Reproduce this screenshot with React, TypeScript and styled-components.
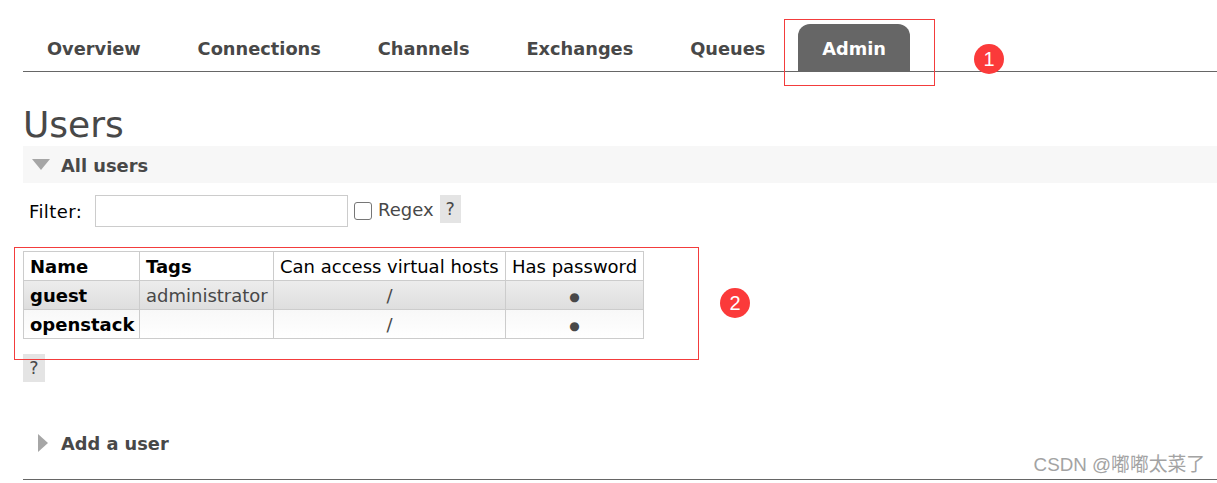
import React from 'react';
import styled, { createGlobalStyle } from 'styled-components';

const Global = createGlobalStyle`
  html, body { margin: 0; padding: 0; background: #fff; }
  body { font-family: "DejaVu Sans", Verdana, sans-serif; color: #484848; overflow: hidden; }
`;

const Page = styled.div`
  position: relative;
  width: 1217px;
  height: 483px;
  box-sizing: border-box;
  padding: 24px 0 0 23px;
  overflow: hidden;
`;

const Nav = styled.nav`
  display: flex;
  height: 47px;
  border-bottom: 1px solid #666;
  gap: 8.9px;
`;

const Tab = styled.a<{ $active?: boolean }>`
  display: block;
  height: 47px;
  line-height: 49px;
  padding: 0 24px;
  font-size: 17.8px;
  font-weight: 700;
  color: ${p => (p.$active ? '#fff' : '#484848')};
  background: ${p => (p.$active ? '#666' : 'transparent')};
  border-radius: 12px 12px 0 0;
`;

const Title = styled.h1`
  margin: 0;
  height: 74px;
  padding-top: 30px;
  box-sizing: border-box;
  font-size: 36px;
  line-height: 45px;
  font-weight: 400;
  color: #484848;
`;

const SectionHead = styled.div`
  display: flex;
  align-items: center;
  height: 37px;
  background: #f7f7f7;
  font-size: 17.85px;
  font-weight: 700;
  color: #484848;
`;

const HeadLabel = styled.span`
  padding-top: 2px;
`;

const ArrowSlot = styled.span<{ $shift?: number }>`
  display: flex;
  justify-content: center;
  align-items: center;
  width: 36px;
  margin-right: 2px;
  padding-left: ${p => p.$shift ?? 0}px;
  box-sizing: border-box;
`;

const FilterRow = styled.div`
  display: flex;
  align-items: center;
  height: 32px;
  margin-top: 12px;
  padding-left: 6px;
  font-size: 18px;
`;

const FilterLabel = styled.label`
  width: 66px;
  color: #000;
  letter-spacing: 0.4px;
`;

const FilterInput = styled.div`
  width: 253px;
  height: 32px;
  box-sizing: border-box;
  border: 1px solid #ccc;
  background: #fff;
`;

const Checkbox = styled.span`
  width: 18px;
  height: 18px;
  margin: 0 6px 0 6px;
  box-sizing: border-box;
  border: 1px solid #767676;
  border-radius: 3px;
  background: #fff;
`;

const RegexText = styled.span`
  color: #484848;
  margin-bottom: 4px;
`;

const Help = styled.span<{ $w: number; $h: number }>`
  display: flex;
  align-items: center;
  justify-content: center;
  width: ${p => p.$w}px;
  height: ${p => p.$h}px;
  background: #e4e4e4;
  color: #484848;
  font-size: 17.5px;
`;

const RegexHelp = styled(Help)`
  margin-left: 6px;
  align-self: flex-start;
`;

const UserTable = styled.table`
  border-collapse: collapse;
  margin-top: 24px;
  table-layout: fixed;
  width: 620px;
  font-size: 18px;
`;

const Th = styled.th<{ $w: number; $bold?: boolean }>`
  width: ${p => p.$w}px;
  height: 29px;
  padding: 0 6px;
  box-sizing: border-box;
  border: 1px solid #ccc;
  background: #fff;
  text-align: left;
  color: #000;
  font-weight: ${p => (p.$bold ? 700 : 400)};
  font-size: 18px;
  white-space: nowrap;
`;

const Row = styled.tr<{ $alt?: boolean }>`
  background: ${p =>
    p.$alt
      ? 'linear-gradient(#f8f8f8, #fff)'
      : 'linear-gradient(#ececec, #dedede)'};
`;

const Td = styled.td<{ $center?: boolean; $bold?: boolean }>`
  height: 29px;
  padding: 0 6px;
  box-sizing: border-box;
  border: 1px solid #ccc;
  font-weight: ${p => (p.$bold ? 700 : 400)};
  color: ${p => (p.$bold ? '#000' : '#484848')};
  text-align: ${p => (p.$center ? 'center' : 'left')};
  white-space: nowrap;
`;

const Dot = styled.span`
  display: inline-block;
  padding-bottom: 2px;
  font-size: 12px;
`;

const TableHelp = styled(Help)`
  margin-top: 15px;
`;

const AddSection = styled.div`
  display: flex;
  align-items: center;
  height: 24px;
  margin-top: 49px;
  font-size: 17.8px;
  font-weight: 700;
  color: #484848;
`;

const Footer = styled.div`
  margin-top: 24px;
  border-top: 1px solid #666;
`;

const RedBox = styled.div<{ $x: number; $y: number; $w: number; $h: number }>`
  position: absolute;
  left: ${p => p.$x}px;
  top: ${p => p.$y}px;
  width: ${p => p.$w}px;
  height: ${p => p.$h}px;
  box-sizing: border-box;
  border: 1px solid #f33c3c;
`;

const Badge = styled.div<{ $x: number; $y: number }>`
  position: absolute;
  left: ${p => p.$x}px;
  top: ${p => p.$y}px;
  width: 30px;
  height: 30px;
  border-radius: 50%;
  background: #fb3a3a;
  color: #fff;
  display: flex;
  align-items: center;
  justify-content: center;
  font-family: "Liberation Sans", sans-serif;
  font-size: 20px;
`;

const Watermark = styled.div`
  position: absolute;
  right: 12px;
  bottom: 6px;
  font-family: "Liberation Sans", "Noto Sans CJK SC", sans-serif;
  font-size: 18.8px;
  line-height: 24px;
  color: #a3a3a3;
  white-space: nowrap;
`;

const tabs = ['Overview', 'Connections', 'Channels', 'Exchanges', 'Queues', 'Admin'];

export default function App() {
  return (
    <Page>
      <Global />
      <Nav>
        {tabs.map(t => (
          <Tab key={t} $active={t === 'Admin'}>{t}</Tab>
        ))}
      </Nav>
      <Title>Users</Title>
      <SectionHead>
        <ArrowSlot>
          <svg width="18" height="11" viewBox="0 0 18 11"><path d="M0 0H18L9 11Z" fill="#a6a6a6" /></svg>
        </ArrowSlot>
        <HeadLabel>All users</HeadLabel>
      </SectionHead>
      <FilterRow>
        <FilterLabel>Filter:</FilterLabel>
        <FilterInput />
        <Checkbox />
        <RegexText>Regex</RegexText>
        <RegexHelp $w={21} $h={28}>?</RegexHelp>
      </FilterRow>
      <UserTable>
        <thead>
          <tr>
            <Th $w={116} $bold>Name</Th>
            <Th $w={134} $bold>Tags</Th>
            <Th $w={232}>Can access virtual hosts</Th>
            <Th $w={138}>Has password</Th>
          </tr>
        </thead>
        <tbody>
          <Row>
            <Td $bold>guest</Td>
            <Td>administrator</Td>
            <Td $center>/</Td>
            <Td $center><Dot>●</Dot></Td>
          </Row>
          <Row $alt>
            <Td $bold>openstack</Td>
            <Td />
            <Td $center>/</Td>
            <Td $center><Dot>●</Dot></Td>
          </Row>
        </tbody>
      </UserTable>
      <TableHelp $w={22} $h={28}>?</TableHelp>
      <AddSection>
        <ArrowSlot $shift={4}>
          <svg width="10" height="18" viewBox="0 0 10 18"><path d="M0 0L10 9L0 18Z" fill="#a6a6a6" /></svg>
        </ArrowSlot>
        Add a user
      </AddSection>
      <Footer />
      <RedBox $x={784} $y={19} $w={151} $h={67} />
      <RedBox $x={14} $y={247} $w={685} $h={113} />
      <Badge $x={974} $y={44}>1</Badge>
      <Badge $x={720} $y={288}>2</Badge>
      <Watermark>CSDN @嘟嘟太菜了</Watermark>
    </Page>
  );
}
